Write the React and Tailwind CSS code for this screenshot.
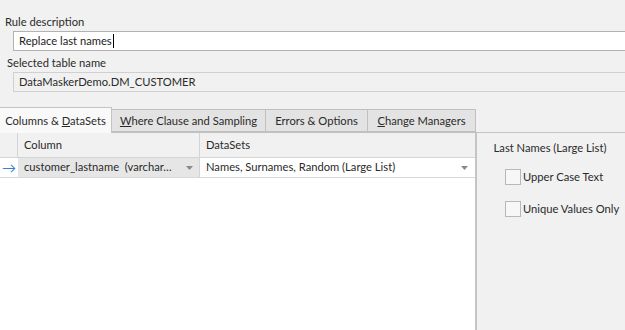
import React from "react";

function Tri() {
  return (
    <svg width="7" height="4" viewBox="0 0 7 4" className="shrink-0">
      <path d="M0 0 H7 L3.5 4 Z" fill="#8a8a8a" />
    </svg>
  );
}

function Checkbox({ label }) {
  return (
    <div className="flex items-center h-[16px] whitespace-nowrap">
      <div className="w-[16px] h-[16px] border border-[#b8b8b8] bg-[#f7f7f7] shrink-0" />
      <span className="ml-[2px]">{label}</span>
    </div>
  );
}

export default function App() {
  return (
    <div
      className="w-[625px] h-[330px] bg-[#f1f1f1] overflow-hidden flex flex-col text-[11.2px] text-[#2a2a2a] whitespace-nowrap"
      style={{ fontFamily: 'Lato, "Noto Sans", sans-serif' }}
    >
      <div className="pt-[13px] pl-[5px] h-[31px] leading-[18px]">Rule description</div>
      <div className="ml-[13px] h-[20px] border-y border-l border-[#b2b2b2] bg-white flex items-center pl-[5px] text-[#222]">
        <span>Replace last names</span>
        <span className="w-[1px] h-[14px] bg-black ml-[1px]" />
      </div>
      <div className="pl-[7px] h-[21px] flex items-center pt-[4px]">Selected table name</div>
      <div className="ml-[13px] h-[20px] border-y border-l border-[#d0d0d0] flex items-center pl-[5px]">
        DataMaskerDemo.DM_CUSTOMER
      </div>
      <div className="h-[15px]" />
      <div className="flex items-end h-[26px]">
        <div className="w-[112px] h-[26px] bg-[#f9f9f9] border-t border-r border-[#c4c4c4] flex items-center justify-center pt-[1px]">
          <span>
            Columns &amp; <span className="underline">D</span>ataSets
          </span>
        </div>
        <div className="w-[154px] h-[24px] bg-[#e3e3e3] border-t border-r border-b-2 border-[#c0c0c0] flex items-center justify-center pt-[1px]">
          <span>
            <span className="underline">W</span>here Clause and Sampling
          </span>
        </div>
        <div className="w-[102px] h-[24px] bg-[#e3e3e3] border-t border-r border-b-2 border-[#c0c0c0] flex items-center justify-center pt-[1px]">
          <span>Errors &amp; Options</span>
        </div>
        <div className="w-[108px] h-[24px] bg-[#e3e3e3] border-t border-r border-b-2 border-[#c0c0c0] flex items-center justify-center pt-[1px]">
          <span>
            <span className="underline">C</span>hange Managers
          </span>
        </div>
        <div className="flex-1 h-[26px] border-b border-[#c4c4c4]" />
      </div>
      <div className="flex flex-1 min-h-0">
        <div className="w-[477px] bg-white border-r-2 border-[#c4c4c4] flex flex-col">
          <div className="flex h-[25px] bg-[#f1f1f1] border-b border-[#d4d4d4]">
            <div className="w-[18px] border-r border-[#d4d4d4]" />
            <div className="w-[182px] border-r border-[#d4d4d4] flex items-center pl-[6px]">Column</div>
            <div className="flex-1 flex items-center pl-[6px]">DataSets</div>
          </div>
          <div className="flex h-[20px] border-b border-[#d8d8d8]">
            <div className="w-[18px] flex items-center justify-center text-[#3c7fd0] text-[14px] leading-none">→</div>
            <div className="w-[182px] bg-[#e6e6e6] border-r border-[#d4d4d4] flex items-center pl-[6px] pr-[6px]">
              <span className="flex-1 overflow-hidden">customer_lastname &nbsp;(varchar…</span>
              <Tri />
            </div>
            <div className="flex-1 flex items-center pl-[6px] pr-[7px]">
              <span className="flex-1">Names, Surnames, Random (Large List)</span>
              <Tri />
            </div>
          </div>
        </div>
        <div className="flex-1 flex flex-col">
          <div className="text-center pt-[7px] h-[29px] pr-[2px]">Last Names (Large List)</div>
          <div className="pl-[28px] pt-[7px] flex flex-col gap-[16px]">
            <Checkbox label="Upper Case Text" />
            <Checkbox label="Unique Values Only" />
          </div>
        </div>
      </div>
    </div>
  );
}
